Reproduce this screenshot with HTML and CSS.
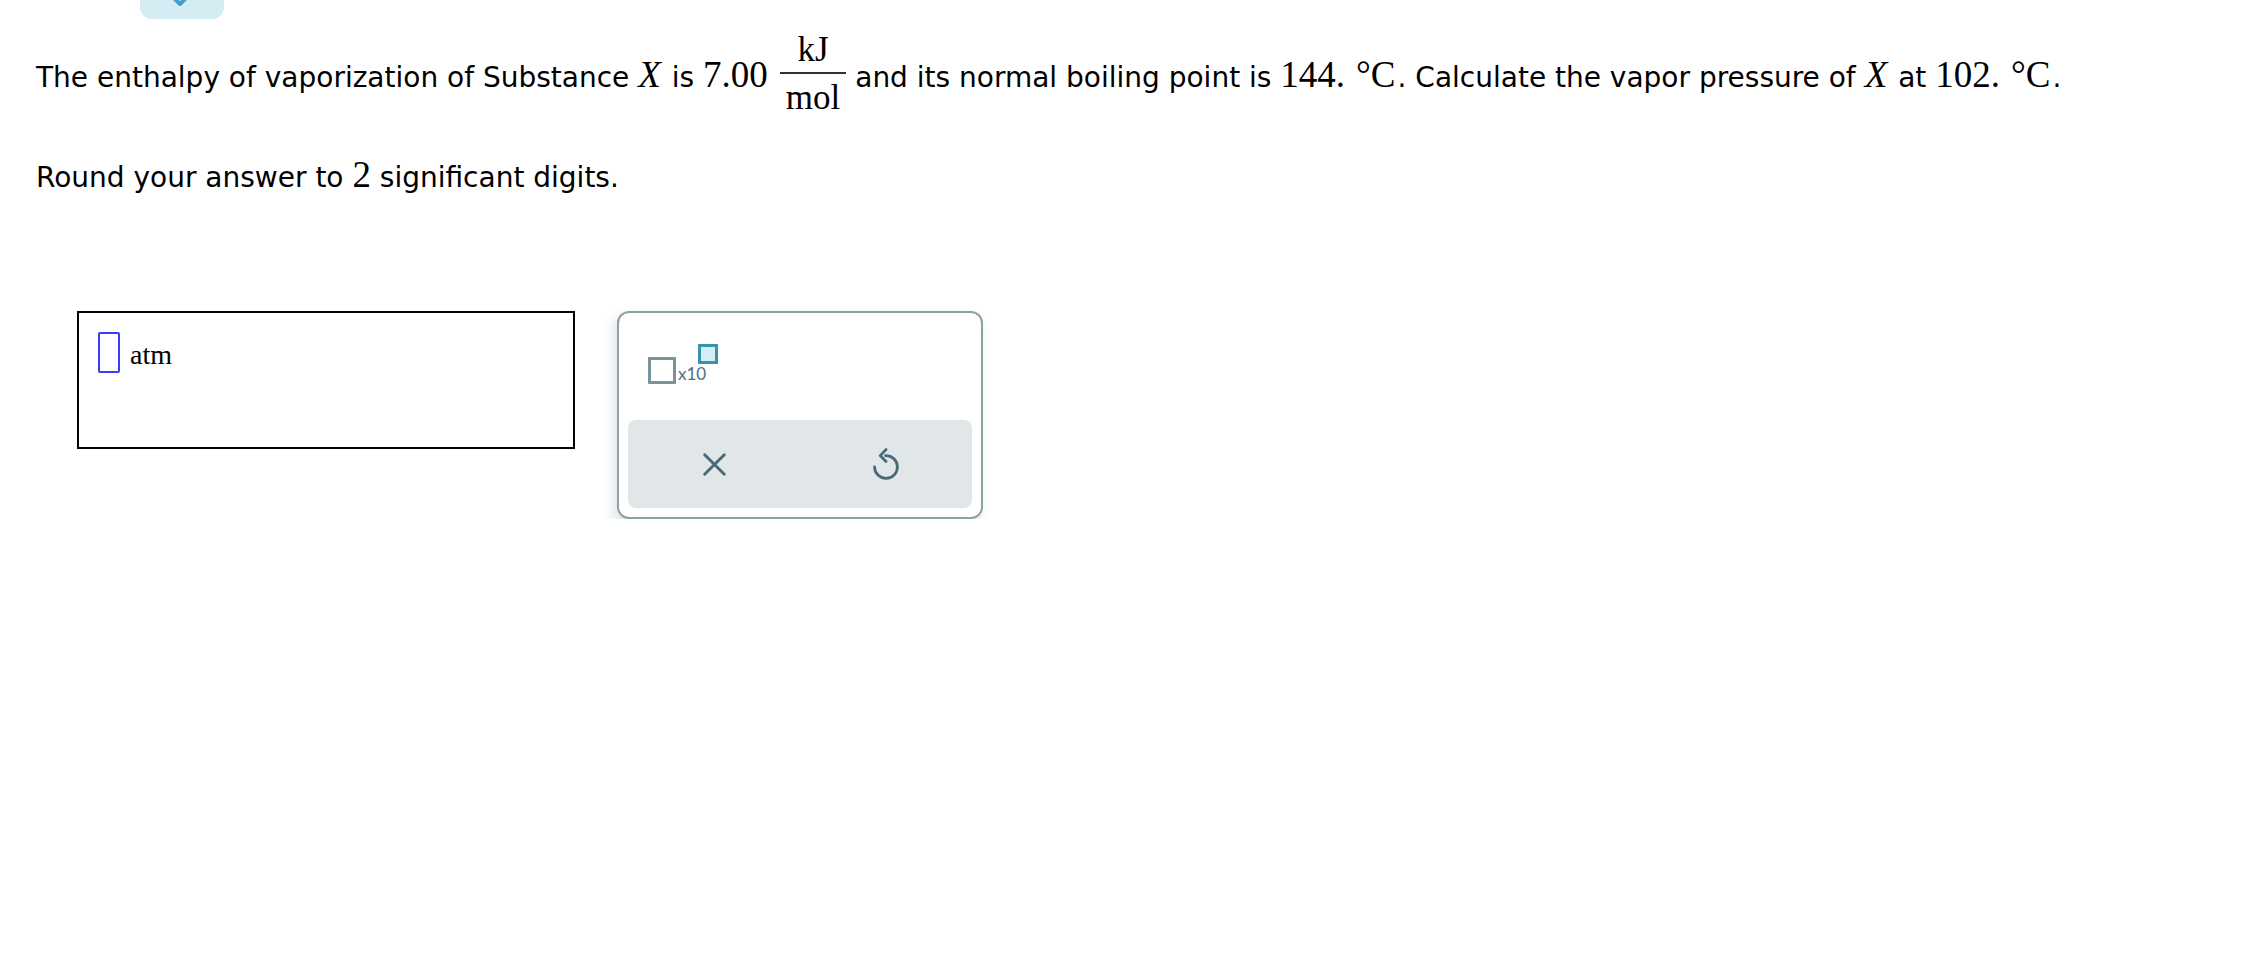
FILE: index.html
```html
<!DOCTYPE html>
<html lang="en">
<head>
<meta charset="utf-8">
<title>Vapor pressure question</title>
<link rel="stylesheet" href="styles.css">
</head>
<body>
<div class="page">
  <div class="tab">
    <svg class="tab-chev" viewBox="0 0 16 8" aria-hidden="true"><path d="M2 -2 L8 4 L14 -2" fill="none" stroke="#3fa1c6" stroke-width="4" stroke-linecap="round" stroke-linejoin="round"/></svg>
  </div>
  <div class="question">
    <p class="line1">The enthalpy of vaporization of Substance <span class="mi">X</span> is <span class="mn">7.00</span><span class="frac"><span class="num">kJ</span><span class="bar"></span><span class="den">mol</span></span>and its normal boiling point is <span class="mn">144.</span><span class="mn deg">°C</span>. Calculate the vapor pressure of <span class="mi">X</span> at <span class="mn">102.</span><span class="mn deg">°C</span>.</p>
    <p class="line2">Round your answer to <span class="mn">2</span> significant digits.</p>
  </div>
  <div class="answer">
    <div class="input-box">
      <span class="cursor"></span>
      <span class="unit">atm</span>
    </div>
    <div class="panel">
      <div class="templates">
        <div class="sci">
          <span class="sq-base"></span>
          <span class="x10">x10</span>
          <span class="sq-exp"></span>
        </div>
      </div>
      <div class="keys">
        <div class="key">
          <svg class="ico-x" viewBox="0 0 24 24" aria-hidden="true"><path d="M1.8 1.8 L22.2 22.2 M22.2 1.8 L1.8 22.2" fill="none" stroke="#4a6977" stroke-width="3" stroke-linecap="round"/></svg>
        </div>
        <div class="key">
          <svg class="ico-undo" viewBox="0 0 26 32" aria-hidden="true"><path d="M1.6 19 A11.4 11.4 0 1 0 12.5 7.6" fill="none" stroke="#4a6977" stroke-width="2.8" stroke-linecap="round"/><path d="M13 1.6 L7.2 7.6 L13 13.4" fill="none" stroke="#4a6977" stroke-width="2.8" stroke-linecap="round" stroke-linejoin="round"/></svg>
        </div>
      </div>
    </div>
  </div>
</div>
</body>
</html>
```
FILE: styles.css
```css
html, body {
  margin: 0;
  padding: 0;
  background: #ffffff;
}

.page {
  width: 2262px;
}

.tab {
  margin-left: 140px;
  width: 84px;
  height: 19px;
  background: #d4edf3;
  border-radius: 0 0 12px 12px;
  display: flex;
  justify-content: center;
  overflow: hidden;
}

.tab-chev {
  width: 16px;
  height: 8px;
  margin-left: -4px;
}

.question {
  padding: 0 36px;
  font-family: "DejaVu Sans", Verdana, sans-serif;
  font-size: 28px;
  line-height: normal;
  color: #000;
}

.question p {
  margin: 0;
  white-space: nowrap;
}

.line1 {
  padding-top: 12.5px;
}

.line2 {
  padding-top: 38px;
}

.mn, .mi {
  font-family: "Liberation Serif", "Times New Roman", serif;
  font-size: 37px;
}

.mi {
  font-style: italic;
  padding-right: 2px;
}

.deg {
  margin-left: 11px;
  margin-right: 2px;
}

.frac {
  display: inline-flex;
  flex-direction: column;
  align-items: center;
  vertical-align: 26px;
  margin: 0 9px 0 12px;
  font-family: "Liberation Serif", "Times New Roman", serif;
  font-size: 35px;
}

.num, .den {
  line-height: 35px;
}

.den {
  padding: 0 6px;
}

.bar {
  align-self: stretch;
  height: 2px;
  background: #333;
  margin: 5px 0 6.5px;
}

.answer {
  display: flex;
  align-items: flex-start;
  gap: 42px;
  margin: 115px 0 0 77px;
}

.input-box {
  width: 498px;
  height: 138px;
  box-sizing: border-box;
  border: 2px solid #000;
  padding: 19px 0 0 19px;
  display: flex;
  align-items: flex-start;
}

.cursor {
  width: 22px;
  height: 41px;
  box-sizing: border-box;
  border: 2px solid #3b3bff;
  border-radius: 2px;
}

.unit {
  font-family: "Liberation Serif", "Times New Roman", serif;
  font-size: 28px;
  line-height: 28px;
  margin: 8.5px 0 0 10px;
  color: #000;
}

.panel {
  width: 366px;
  height: 208px;
  box-sizing: border-box;
  border: 2px solid #8d9fa7;
  border-radius: 12px;
  padding: 9px;
  display: flex;
  flex-direction: column;
  background: #fff;
  box-shadow: -3px 6px 12px rgba(60, 85, 95, 0.18);
}

.templates {
  flex: 1;
  padding: 22px 0 0 20px;
}

.sci {
  display: flex;
  align-items: flex-start;
}

.sq-base {
  width: 28px;
  height: 27px;
  box-sizing: border-box;
  border: 3px solid #7b929b;
  border-radius: 1px;
  margin-top: 13px;
}

.x10 {
  font-family: Lato, "Open Sans", sans-serif;
  font-size: 17px;
  line-height: 17px;
  color: #4f6e7a;
  margin: 21px 0 0 2px;
}

.sq-exp {
  width: 20px;
  height: 20px;
  box-sizing: border-box;
  border: 3px solid #3a93ae;
  background: #d4eef5;
  margin-left: -8px;
}

.keys {
  height: 88px;
  background: #e1e6e8;
  border-radius: 8px;
  display: flex;
}

.key {
  flex: 1;
  display: flex;
  align-items: center;
  justify-content: center;
}

.ico-x {
  width: 23px;
  height: 23px;
}

.ico-undo {
  width: 26px;
  height: 32px;
}
```
